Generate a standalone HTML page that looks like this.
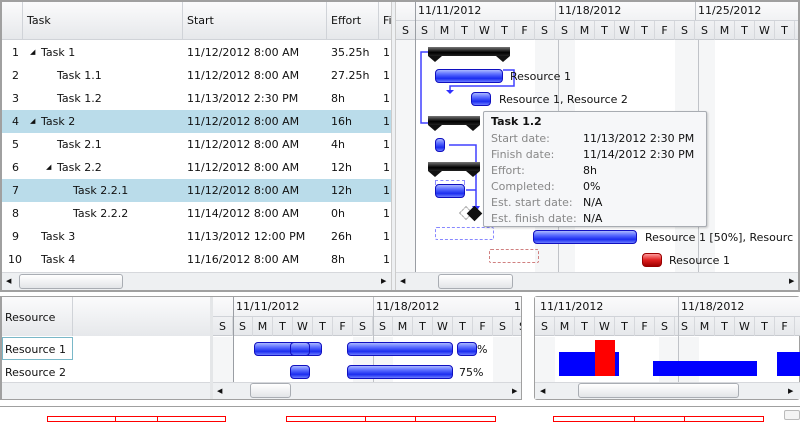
<!DOCTYPE html>
<html><head><meta charset="utf-8"><style>
*{margin:0;padding:0;box-sizing:border-box}
body{width:800px;height:420px;overflow:hidden;background:#fff;font-family:"DejaVu Sans","Liberation Sans",sans-serif;font-size:11px;color:#111;position:relative}
.a{position:absolute}
.t{position:absolute;white-space:nowrap;line-height:13px}
.hdr{background:linear-gradient(#fbfbfc,#e6e8eb)}
.bar{position:absolute;border:1px solid #1010c0;border-radius:4px;background:linear-gradient(#aab8ff 0%,#5a6cff 35%,#1a2cf0 70%,#6b7cff 100%)}
.sum{position:absolute;height:9px;background:linear-gradient(#777,#000 60%,#222)}
.tri{position:absolute;width:0;height:0;border-left:7px solid transparent;border-right:7px solid transparent;border-top:6px solid #111}
.vl{position:absolute;width:1px;background:#d0d3d8}
.sb{position:absolute;background:#eef0f2;border-top:1px solid #d6d8dc}
.thumb{position:absolute;border:1px solid #a9adb3;border-radius:3px;background:linear-gradient(#fff,#e3e5e8)}
.d{position:absolute;text-align:center;width:20px;line-height:20px;border-right:1px solid #d6d8dc}
</style></head><body>
<div class="a" style="left:0;top:0;width:800px;height:292px;border:2px solid #a0a0a0;border-bottom:2px solid #a0a0a0"></div>
<div class="a hdr" style="left:2px;top:2px;width:389px;height:38px;border-bottom:1px solid #d0d3d8"></div>
<div class="vl" style="left:22px;top:2px;height:38px"></div>
<div class="vl" style="left:182px;top:2px;height:38px"></div>
<div class="vl" style="left:326px;top:2px;height:38px"></div>
<div class="vl" style="left:378px;top:2px;height:38px"></div>
<div class="t" style="left:27px;top:14px">Task</div>
<div class="t" style="left:187px;top:14px">Start</div>
<div class="t" style="left:331px;top:14px">Effort</div>
<div class="t" style="left:383px;top:14px">Fi</div>
<div class="a" style="left:2px;top:110px;width:389px;height:23px;background:#badcea"></div>
<div class="a" style="left:2px;top:179px;width:389px;height:23px;background:#badcea"></div>
<div class="t" style="left:12px;top:46px">1</div><div class="t" style="left:30px;top:46px;font-size:7px">◢</div><div class="t" style="left:41px;top:46px">Task 1</div><div class="t" style="left:187px;top:46px">11/12/2012 8:00 AM</div><div class="t" style="left:331px;top:46px">35.25h</div><div class="t" style="left:383px;top:46px">1</div>
<div class="t" style="left:12px;top:69px">2</div><div class="t" style="left:57px;top:69px">Task 1.1</div><div class="t" style="left:187px;top:69px">11/12/2012 8:00 AM</div><div class="t" style="left:331px;top:69px">27.25h</div><div class="t" style="left:383px;top:69px">1</div>
<div class="t" style="left:12px;top:92px">3</div><div class="t" style="left:57px;top:92px">Task 1.2</div><div class="t" style="left:187px;top:92px">11/13/2012 2:30 PM</div><div class="t" style="left:331px;top:92px">8h</div><div class="t" style="left:383px;top:92px">1</div>
<div class="t" style="left:12px;top:115px">4</div><div class="t" style="left:30px;top:115px;font-size:7px">◢</div><div class="t" style="left:41px;top:115px">Task 2</div><div class="t" style="left:187px;top:115px">11/12/2012 8:00 AM</div><div class="t" style="left:331px;top:115px">16h</div><div class="t" style="left:383px;top:115px">1</div>
<div class="t" style="left:12px;top:138px">5</div><div class="t" style="left:57px;top:138px">Task 2.1</div><div class="t" style="left:187px;top:138px">11/12/2012 8:00 AM</div><div class="t" style="left:331px;top:138px">4h</div><div class="t" style="left:383px;top:138px">1</div>
<div class="t" style="left:12px;top:161px">6</div><div class="t" style="left:46px;top:161px;font-size:7px">◢</div><div class="t" style="left:57px;top:161px">Task 2.2</div><div class="t" style="left:187px;top:161px">11/12/2012 8:00 AM</div><div class="t" style="left:331px;top:161px">12h</div><div class="t" style="left:383px;top:161px">1</div>
<div class="t" style="left:12px;top:184px">7</div><div class="t" style="left:73px;top:184px">Task 2.2.1</div><div class="t" style="left:187px;top:184px">11/12/2012 8:00 AM</div><div class="t" style="left:331px;top:184px">12h</div><div class="t" style="left:383px;top:184px">1</div>
<div class="t" style="left:12px;top:207px">8</div><div class="t" style="left:73px;top:207px">Task 2.2.2</div><div class="t" style="left:187px;top:207px">11/14/2012 8:00 AM</div><div class="t" style="left:331px;top:207px">0h</div><div class="t" style="left:383px;top:207px">1</div>
<div class="t" style="left:12px;top:230px">9</div><div class="t" style="left:41px;top:230px">Task 3</div><div class="t" style="left:187px;top:230px">11/13/2012 12:00 PM</div><div class="t" style="left:331px;top:230px">26h</div><div class="t" style="left:383px;top:230px">1</div>
<div class="t" style="left:8px;top:253px">10</div><div class="t" style="left:41px;top:253px">Task 4</div><div class="t" style="left:187px;top:253px">11/16/2012 8:00 AM</div><div class="t" style="left:331px;top:253px">8h</div><div class="t" style="left:383px;top:253px">1</div>
<div class="sb" style="left:2px;top:272px;width:389px;height:18px"></div>
<div class="thumb" style="left:19px;top:274px;width:104px;height:15px"></div>
<div class="t" style="left:6px;top:275px;font-size:7px">◀</div><div class="t" style="left:381px;top:275px;font-size:7px">▶</div>
<div class="a" style="left:391px;top:2px;width:5px;height:288px;background:#eef0f2;border-left:1px solid #ccc;border-right:1px solid #ccc"></div>
<div class="a" style="left:396px;top:40px;width:19px;height:232px;background:#f5f6f7"></div>
<div class="a" style="left:535px;top:40px;width:40px;height:232px;background:#f5f6f7"></div>
<div class="a" style="left:675px;top:40px;width:40px;height:232px;background:#f5f6f7"></div>
<div class="a hdr" style="left:396px;top:2px;width:402px;height:38px;border-bottom:1px solid #c8cbd0"></div>
<div class="a" style="left:396px;top:20px;width:402px;height:1px;background:#d0d3d8"></div>
<div class="t" style="left:418px;top:4px">11/11/2012</div>
<div class="t" style="left:558px;top:4px">11/18/2012</div>
<div class="t" style="left:698px;top:4px">11/25/2012</div>
<div class="a" style="left:396px;top:21px;width:404px;height:19px;font-size:11px">
<div class="d" style="left:0;line-height:19px">S</div><div class="d" style="left:19px;line-height:19px">S</div><div class="d" style="left:39px;line-height:19px">M</div><div class="d" style="left:59px;line-height:19px">T</div><div class="d" style="left:79px;line-height:19px">W</div><div class="d" style="left:99px;line-height:19px">T</div><div class="d" style="left:119px;line-height:19px">F</div><div class="d" style="left:139px;line-height:19px">S</div><div class="d" style="left:159px;line-height:19px">S</div><div class="d" style="left:179px;line-height:19px">M</div><div class="d" style="left:199px;line-height:19px">T</div><div class="d" style="left:219px;line-height:19px">W</div><div class="d" style="left:239px;line-height:19px">T</div><div class="d" style="left:259px;line-height:19px">F</div><div class="d" style="left:279px;line-height:19px">S</div><div class="d" style="left:299px;line-height:19px">S</div><div class="d" style="left:319px;line-height:19px">M</div><div class="d" style="left:339px;line-height:19px">T</div><div class="d" style="left:359px;line-height:19px">W</div><div class="d" style="left:379px;line-height:19px">T</div></div>
<div class="a" style="left:415px;top:2px;width:1px;height:270px;background:#9a9ea4"></div>
<div class="a" style="left:555px;top:2px;width:1px;height:18px;background:#c0c3c8"></div>
<div class="a" style="left:558px;top:40px;width:1px;height:232px;background:#c0c3c8"></div>
<div class="a" style="left:695px;top:2px;width:1px;height:18px;background:#c0c3c8"></div>
<div class="a" style="left:698px;top:40px;width:1px;height:232px;background:#c0c3c8"></div>
<svg class="a" style="left:396px;top:40px" width="404" height="232"><g fill="none" stroke="#4040ff" stroke-width="1.5">
<path d="M34 12 H25 V83 H34"/><path d="M107 30 H118 V46 H54 V52"/><path d="M53 105 H80 V168"/><path d="M70 150 H80"/></g>
<path d="M50 50 L58 50 L54 54Z M76 166 L84 166 L80 172Z" fill="#3030ff"/></svg>
<div class="sum" style="left:428px;top:47px;width:82px"></div><div class="tri" style="left:428px;top:56px"></div><div class="tri" style="left:496px;top:56px"></div>
<div class="sum" style="left:428px;top:116px;width:52px"></div><div class="tri" style="left:428px;top:125px"></div><div class="tri" style="left:466px;top:125px"></div>
<div class="sum" style="left:428px;top:162px;width:52px"></div><div class="tri" style="left:428px;top:171px"></div><div class="tri" style="left:466px;top:171px"></div>
<div class="bar" style="left:435px;top:69px;width:68px;height:14px"></div><div class="t" style="left:510px;top:70px">Resource 1</div>
<div class="bar" style="left:471px;top:92px;width:20px;height:14px"></div><div class="t" style="left:499px;top:93px">Resource 1, Resource 2</div>
<div class="bar" style="left:435px;top:138px;width:10px;height:14px"></div>
<div class="a" style="left:435px;top:180px;width:30px;height:5px;border:1px dashed #8888ff;border-bottom:none"></div>
<div class="bar" style="left:435px;top:184px;width:30px;height:14px"></div>
<div class="a" style="left:461px;top:208px;width:10px;height:10px;border:1px dashed #aaa;transform:rotate(45deg)"></div>
<div class="a" style="left:469px;top:208px;width:11px;height:11px;background:#111;transform:rotate(45deg)"></div>
<div class="a" style="left:435px;top:227px;width:59px;height:13px;border:1px dashed #8888ff;border-radius:2px"></div>
<div class="bar" style="left:533px;top:230px;width:104px;height:14px"></div><div class="t" style="left:645px;top:231px">Resource 1 [50%], Resourc</div>
<div class="a" style="left:489px;top:249px;width:50px;height:14px;border:1px dashed #d08080;border-radius:2px"></div>
<div class="a" style="left:642px;top:253px;width:20px;height:14px;border:1px solid #900;border-radius:4px;background:linear-gradient(#ff9a9a,#e02020 50%,#a00000)"></div><div class="t" style="left:669px;top:254px">Resource 1</div>
<div class="a" style="left:483px;top:111px;width:224px;height:116px;background:#f6f7f9;border:1px solid #a8acb2;border-radius:2px;box-shadow:1px 1px 2px rgba(0,0,0,.2)"></div>
<div class="t" style="left:491px;top:115px;font-weight:bold">Task 1.2</div>
<div class="t" style="left:491px;top:132px;color:#888">Start date:</div><div class="t" style="left:583px;top:132px">11/13/2012 2:30 PM</div>
<div class="t" style="left:491px;top:148px;color:#888">Finish date:</div><div class="t" style="left:583px;top:148px">11/14/2012 2:30 PM</div>
<div class="t" style="left:491px;top:164px;color:#888">Effort:</div><div class="t" style="left:583px;top:164px">8h</div>
<div class="t" style="left:491px;top:180px;color:#888">Completed:</div><div class="t" style="left:583px;top:180px">0%</div>
<div class="t" style="left:491px;top:196px;color:#888">Est. start date:</div><div class="t" style="left:583px;top:196px">N/A</div>
<div class="t" style="left:491px;top:212px;color:#888">Est. finish date:</div><div class="t" style="left:583px;top:212px">N/A</div>
<div class="sb" style="left:396px;top:272px;width:402px;height:18px"></div>
<div class="thumb" style="left:438px;top:274px;width:75px;height:15px"></div>
<div class="t" style="left:400px;top:275px;font-size:7px">◀</div><div class="t" style="left:789px;top:275px;font-size:7px">▶</div>

<div class="a" style="left:0;top:296px;width:522px;height:104px;border:1px solid #a0a0a0;border-left:2px solid #a0a0a0"></div>
<div class="a hdr" style="left:2px;top:297px;width:208px;height:39px"></div>
<div class="vl" style="left:72px;top:297px;height:39px"></div>
<div class="t" style="left:5px;top:311px">Resource</div>
<div class="a" style="left:2px;top:337px;width:71px;height:23px;border:1px solid #7ab8c8"></div>
<div class="t" style="left:5px;top:343px">Resource 1</div>
<div class="t" style="left:5px;top:366px">Resource 2</div>
<div class="sb" style="left:2px;top:382px;width:208px;height:17px"></div>
<div class="a" style="left:210px;top:297px;width:3px;height:102px;background:#e4e6e8"></div>
<div class="a" style="left:213px;top:337px;width:20px;height:45px;background:#f5f6f7"></div>
<div class="a" style="left:353px;top:337px;width:40px;height:45px;background:#f5f6f7"></div>
<div class="a" style="left:493px;top:337px;width:28px;height:45px;background:#f5f6f7"></div>
<div class="a hdr" style="left:213px;top:297px;width:308px;height:39px;border-bottom:1px solid #c8cbd0"></div>
<div class="a" style="left:213px;top:316px;width:308px;height:1px;background:#d0d3d8"></div>
<div class="t" style="left:236px;top:300px">11/11/2012</div><div class="t" style="left:376px;top:300px">11/18/2012</div><div class="t" style="left:514px;top:300px">1</div>
<div class="a" style="left:213px;top:317px;width:308px;height:19px;overflow:hidden">
<div class="d" style="left:0;line-height:19px">S</div><div class="d" style="left:20px;line-height:19px">S</div><div class="d" style="left:40px;line-height:19px">M</div><div class="d" style="left:60px;line-height:19px">T</div><div class="d" style="left:80px;line-height:19px">W</div><div class="d" style="left:100px;line-height:19px">T</div><div class="d" style="left:120px;line-height:19px">F</div><div class="d" style="left:140px;line-height:19px">S</div><div class="d" style="left:160px;line-height:19px">S</div><div class="d" style="left:180px;line-height:19px">M</div><div class="d" style="left:200px;line-height:19px">T</div><div class="d" style="left:220px;line-height:19px">W</div><div class="d" style="left:240px;line-height:19px">T</div><div class="d" style="left:260px;line-height:19px">F</div><div class="d" style="left:280px;line-height:19px">S</div><div class="d" style="left:300px;line-height:19px">S</div></div>
<div class="a" style="left:233px;top:297px;width:1px;height:85px;background:#9a9ea4"></div>
<div class="a" style="left:373px;top:297px;width:1px;height:85px;background:#c0c3c8"></div>
<div class="bar" style="left:254px;top:342px;width:68px;height:14px"></div>
<div class="bar" style="left:290px;top:342px;width:20px;height:14px;background:transparent"></div>
<div class="bar" style="left:347px;top:342px;width:106px;height:14px"></div>
<div class="bar" style="left:457px;top:342px;width:20px;height:14px"></div><div class="t" style="left:477px;top:343px">%</div>
<div class="bar" style="left:290px;top:365px;width:20px;height:14px"></div>
<div class="bar" style="left:347px;top:365px;width:106px;height:14px"></div><div class="t" style="left:459px;top:366px">75%</div>
<div class="sb" style="left:213px;top:382px;width:308px;height:17px"></div>
<div class="thumb" style="left:250px;top:383px;width:41px;height:15px"></div>
<div class="t" style="left:217px;top:385px;font-size:7px">◀</div><div class="t" style="left:512px;top:385px;font-size:7px">▶</div>

<div class="a" style="left:534px;top:296px;width:266px;height:104px;border:1px solid #a0a0a0;border-radius:3px"></div>
<div class="a" style="left:535px;top:337px;width:20px;height:45px;background:#f5f6f7"></div>
<div class="a" style="left:659px;top:337px;width:40px;height:45px;background:#f5f6f7"></div>
<div class="a hdr" style="left:535px;top:297px;width:265px;height:39px;border-bottom:1px solid #c8cbd0"></div>
<div class="a" style="left:535px;top:316px;width:265px;height:1px;background:#d0d3d8"></div>
<div class="t" style="left:540px;top:300px">11/11/2012</div><div class="t" style="left:681px;top:300px">11/18/2012</div>
<div class="a" style="left:535px;top:317px;width:265px;height:19px;overflow:hidden">
<div class="d" style="left:0;line-height:19px">S</div><div class="d" style="left:20px;line-height:19px">M</div><div class="d" style="left:40px;line-height:19px">T</div><div class="d" style="left:60px;line-height:19px">W</div><div class="d" style="left:80px;line-height:19px">T</div><div class="d" style="left:100px;line-height:19px">F</div><div class="d" style="left:120px;line-height:19px">S</div><div class="d" style="left:140px;line-height:19px">S</div><div class="d" style="left:160px;line-height:19px">M</div><div class="d" style="left:180px;line-height:19px">T</div><div class="d" style="left:200px;line-height:19px">W</div><div class="d" style="left:220px;line-height:19px">T</div><div class="d" style="left:240px;line-height:19px">F</div></div>
<div class="a" style="left:678px;top:297px;width:1px;height:85px;background:#c0c3c8"></div>
<div class="a" style="left:559px;top:352px;width:60px;height:24px;background:#0000ff"></div>
<div class="a" style="left:595px;top:340px;width:20px;height:36px;background:#ff0000"></div>
<div class="a" style="left:653px;top:361px;width:104px;height:15px;background:#0000ff"></div>
<div class="a" style="left:777px;top:352px;width:23px;height:24px;background:#0000ff"></div>
<div class="sb" style="left:535px;top:382px;width:265px;height:17px"></div>
<div class="thumb" style="left:578px;top:383px;width:161px;height:15px"></div>
<div class="t" style="left:540px;top:385px;font-size:7px">◀</div><div class="t" style="left:788px;top:385px;font-size:7px">▶</div>

<div class="a" style="left:0;top:406px;width:800px;height:1px;background:#a0a0a0"></div>
<div class="a" style="left:47px;top:416px;width:179px;height:6px;border:1px solid #f00"></div><div class="a" style="left:115px;top:416px;width:1px;height:5px;background:#f00"></div><div class="a" style="left:157px;top:416px;width:1px;height:5px;background:#f00"></div>
<div class="a" style="left:286px;top:416px;width:210px;height:6px;border:1px solid #f00"></div><div class="a" style="left:365px;top:416px;width:1px;height:5px;background:#f00"></div><div class="a" style="left:415px;top:416px;width:1px;height:5px;background:#f00"></div>
<div class="a" style="left:553px;top:416px;width:211px;height:6px;border:1px solid #f00"></div><div class="a" style="left:634px;top:416px;width:1px;height:5px;background:#f00"></div><div class="a" style="left:684px;top:416px;width:1px;height:5px;background:#f00"></div>
<div class="a" style="left:784px;top:410px;width:16px;height:10px;border:1px solid #bbb;border-radius:2px;background:#f4f4f4"></div>
</body></html>
